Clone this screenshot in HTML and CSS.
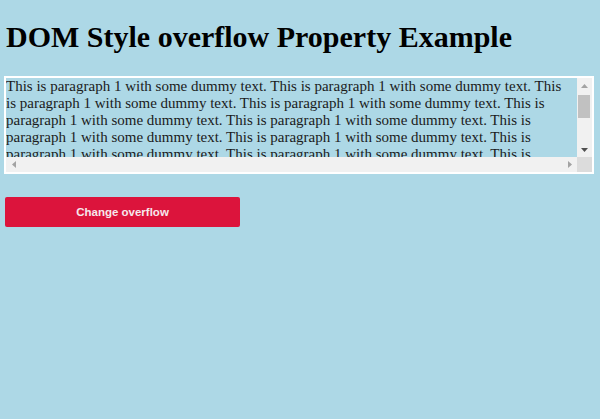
FILE: index.html
```html
<!DOCTYPE html>
<html>
<head>
<meta charset="utf-8">
<title>DOM Style overflow Property</title>
<link rel="stylesheet" href="styles.css">
</head>
<body>
<h1 class="title">DOM Style overflow Property Example</h1>
<div class="box">
  <div class="content">This is paragraph 1 with some dummy text. This is paragraph 1 with some dummy text. This is paragraph 1 with some dummy text. This is paragraph 1 with some dummy text. This is paragraph 1 with some dummy text. This is paragraph 1 with some dummy text. This is paragraph 1 with some dummy text. This is paragraph 1 with some dummy text. This is paragraph 1 with some dummy text. This is paragraph 1 with some dummy text. This is paragraph 1 with some dummy text. This is paragraph 1 with some dummy text. This is paragraph 1 with some dummy text. This is paragraph 1 with some dummy text. This is paragraph 1 with some dummy text. This is paragraph 1 with some dummy text.</div>
  <div class="vbar">
    <div class="arrow"><svg width="7" height="4" viewBox="0 0 7 4"><polygon points="0,4 7,4 3.5,0" fill="#a3a3a3"/></svg></div>
    <div class="vtrack"><div class="vthumb"></div></div>
    <div class="arrow"><svg width="7" height="4" viewBox="0 0 7 4"><polygon points="0,0 7,0 3.5,4" fill="#505050"/></svg></div>
  </div>
  <div class="hbar">
    <div class="arrow"><svg width="4" height="7" viewBox="0 0 4 7"><polygon points="4,0 4,7 0,3.5" fill="#a3a3a3"/></svg></div>
    <div class="htrack"></div>
    <div class="arrow"><svg width="4" height="7" viewBox="0 0 4 7"><polygon points="0,0 0,7 4,3.5" fill="#a3a3a3"/></svg></div>
  </div>
  <div class="corner"></div>
</div>
<button class="btn">Change overflow</button>
</body>
</html>
```
FILE: styles.css
```css
html, body {
  background: #add8e6;
}
body {
  margin: 0;
  padding: 0 4px;
  font-family: "Liberation Serif", "Times New Roman", serif;
  color: #000;
}
.title {
  margin: 0;
  padding-top: 17px;
  font-size: 30px;
  line-height: 40px;
  font-weight: bold;
  padding-left: 2px;
}
.box {
  margin-top: 19px;
  width: 586px;
  height: 94px;
  border: 2px solid #fff;
  display: grid;
  grid-template-columns: 1fr 15px;
  grid-template-rows: 1fr 15px;
}
.content {
  overflow: hidden;
  padding-right: 5px;
  font-size: 15px;
  line-height: 17px;
  color: #1b1b1b;
}
.vbar {
  background: #f1f1f1;
  display: flex;
  flex-direction: column;
}
.hbar {
  background: #f1f1f1;
  display: flex;
}
.arrow {
  width: 15px;
  height: 15px;
  flex: none;
  display: flex;
  align-items: center;
  justify-content: center;
}
.vtrack {
  flex: 1;
  padding: 2px 2px 0 1px;
}
.vthumb {
  height: 23px;
  background: #c1c1c1;
}
.htrack {
  flex: 1;
}
.corner {
  background: #dcdcdc;
}
.btn {
  display: block;
  margin-top: 23px;
  margin-left: 1px;
  width: 235px;
  height: 30px;
  background: #dc143c;
  color: #f6e8ec;
  border: none;
  border-radius: 2px;
  font-family: "Liberation Sans", Arial, sans-serif;
  font-weight: bold;
  font-size: 11.5px;
}
```
